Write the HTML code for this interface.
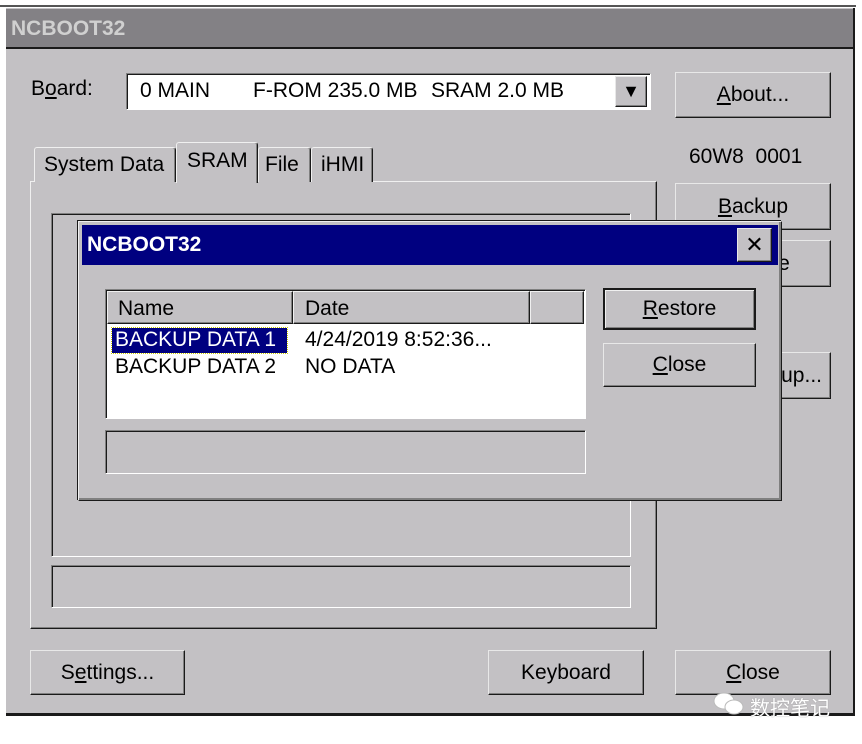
<!DOCTYPE html><html><head><style>
*{box-sizing:border-box;margin:0;padding:0}
body{width:862px;height:744px;background:#fff;position:relative;overflow:hidden;font-family:"Liberation Sans","DejaVu Sans",sans-serif;font-size:21px;color:#000}
.a{position:absolute;white-space:pre}
.btn{position:absolute;background:#c3c1c4;border:1px solid;border-color:#e8e8e8 #1a1a1a #1a1a1a #e8e8e8;box-shadow:inset -1px -1px 0 #808080,inset 1px 1px 0 #c3c1c4;display:flex;align-items:center;justify-content:center;font-size:21px}
.sunk{position:absolute;border:1px solid;border-color:#808080 #fff #fff #808080;box-shadow:inset 1px 1px 0 #1a1a1a}
.raise{position:absolute;border:1px solid;border-color:#f0f0f0 #1a1a1a #1a1a1a #f0f0f0;box-shadow:inset -1px -1px 0 #808080}
u{text-decoration:underline}
.tab{position:absolute;background:#c3c1c4;border:1px solid;border-bottom:none;border-color:#f0f0f0 #1a1a1a #1a1a1a #f0f0f0;border-radius:3px 3px 0 0;box-shadow:inset -1px 0 0 #808080;padding-left:9px;padding-top:5px}
</style></head><body>
<div class="a" style="left:0;top:5px;width:856px;height:2px;background:#555"></div>
<div class="a" style="left:6px;top:8px;width:849px;height:708px;background:#c3c1c4;border-right:2px solid #1a1a1a;border-bottom:3px solid #1a1a1a"></div>
<div class="a" style="left:6px;top:9px;width:847px;height:40px;background:#838185;border-bottom:2px solid #1a1a1a;color:#d0d0d0;font-weight:bold;font-size:21px;padding:8px 0 0 5px">NCBOOT32</div>

<div class="a" style="left:31px;top:77px">B<u>o</u>ard:</div>
<div class="sunk" style="left:126px;top:73px;width:525px;height:37px;background:#fff"></div>
<div class="a" style="left:140px;top:79px">0 MAIN</div>
<div class="a" style="left:253px;top:79px">F-ROM 235.0 MB</div>
<div class="a" style="left:431px;top:79px">SRAM 2.0 MB</div>
<div class="btn" style="left:615px;top:76px;width:32px;height:31px;font-size:18px">&#9660;</div>
<div class="btn" style="left:675px;top:72px;width:156px;height:46px"><u>A</u>bout...</div>
<div class="a" style="left:689px;top:145px">60W8  0001</div>
<div class="btn" style="left:675px;top:183px;width:156px;height:47px"><u>B</u>ackup</div>
<div class="btn" style="left:675px;top:240px;width:156px;height:47px">Restore</div>
<div class="btn" style="left:675px;top:352px;width:156px;height:47px;justify-content:flex-end;padding-right:8px">Setup...</div>

<div class="raise" style="left:30px;top:181px;width:627px;height:448px"></div>
<div class="tab" style="left:34px;top:147px;width:142px;height:35px">System Data</div>
<div class="tab" style="left:258px;top:147px;width:53px;height:35px;padding-left:6px">File</div>
<div class="tab" style="left:311px;top:147px;width:62px;height:35px">iHMI</div>
<div class="tab" style="left:176px;top:142px;width:82px;height:41px;padding-top:6px;padding-left:10px">SRAM</div>
<div class="sunk" style="left:51px;top:213px;width:580px;height:344px"></div>
<div class="sunk" style="left:51px;top:565px;width:580px;height:43px"></div>

<div class="btn" style="left:30px;top:650px;width:155px;height:45px">S<u>e</u>ttings...</div>
<div class="btn" style="left:488px;top:650px;width:156px;height:45px">Keyboard</div>
<div class="btn" style="left:675px;top:650px;width:156px;height:45px"><u>C</u>lose</div>
<svg class="a" style="left:712px;top:691px" width="34" height="26"><ellipse cx="12" cy="10" rx="10" ry="8" fill="#fff" stroke="#bbb"/><ellipse cx="22" cy="16" rx="9" ry="7" fill="#fff" stroke="#bbb"/></svg>
<div class="a" style="left:750px;top:692px;color:#fff;font-family:'Noto Sans CJK SC',sans-serif;font-size:20px;text-shadow:0 0 1px #888">数控笔记</div>

<!-- dialog -->
<div class="a" style="left:78px;top:221px;width:704px;height:280px;background:#c3c1c4;border:1px solid;border-color:#f0f0f0 #1a1a1a #1a1a1a #f0f0f0;box-shadow:inset -2px -2px 0 #808080,-1px -1px 0 #1a1a1a"></div>
<div class="a" style="left:82px;top:225px;width:696px;height:40px;background:#000080;color:#fff;font-weight:bold;font-size:21px;padding:8px 0 0 5px">NCBOOT32</div>
<div class="btn" style="left:737px;top:228px;width:35px;height:34px;font-size:22px">&#10005;</div>
<div class="sunk" style="left:105px;top:289px;width:481px;height:130px;background:#fff"></div>
<div class="a" style="left:107px;top:291px;width:477px;height:33px;background:#c3c1c4"></div>
<div class="raise" style="left:107px;top:291px;width:186px;height:33px;padding:5px 0 0 10px">Name</div>
<div class="raise" style="left:293px;top:291px;width:237px;height:33px;padding:5px 0 0 11px">Date</div>
<div class="raise" style="left:530px;top:291px;width:54px;height:33px"></div>
<div class="a" style="left:112px;top:328px;width:175px;height:25px;background:#000080;outline:1px dotted #cc0;color:#fff;padding:0 0 0 3px">BACKUP DATA 1</div>
<div class="a" style="left:305px;top:328px">4/24/2019 8:52:36...</div>
<div class="a" style="left:115px;top:355px">BACKUP DATA 2</div>
<div class="a" style="left:305px;top:355px">NO DATA</div>
<div class="sunk" style="left:105px;top:430px;width:481px;height:44px"></div>
<div class="btn" style="left:603px;top:288px;width:153px;height:42px;border:2px solid #1a1a1a;box-shadow:inset 1px 1px 0 #f0f0f0,inset -1px -1px 0 #808080"><u>R</u>estore</div>
<div class="btn" style="left:603px;top:343px;width:153px;height:44px"><u>C</u>lose</div>
</body></html>
